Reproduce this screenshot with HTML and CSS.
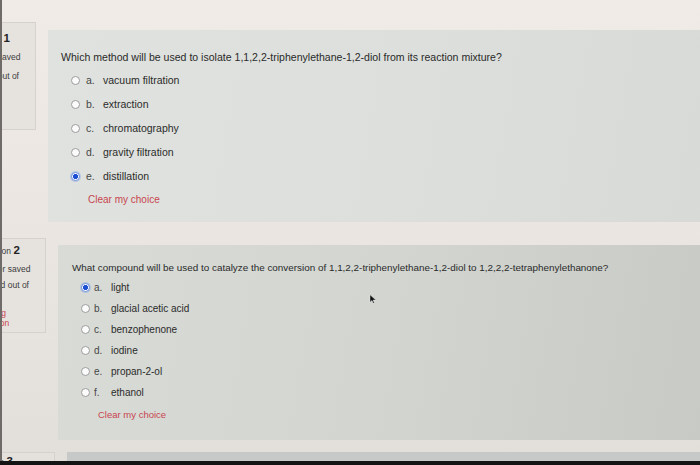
FILE: index.html
```html
<!DOCTYPE html>
<html lang="en">
<head>
<meta charset="utf-8">
<title>Quiz</title>
<link rel="stylesheet" href="styles.css">
</head>
<body>
<div class="screen">
  <div class="que q1">
    <div class="info">
      <div class="qno">Question <b>1</b></div>
      <div class="state">Answer saved</div>
      <div class="grade">Marked out of 1.00</div>
      <div class="flag"><svg class="flagicon" viewBox="0 0 10 10" width="10" height="10"><path d="M2 1v8M2 1.5h6l-1.5 2 1.5 2H2" fill="none" stroke="#c9454f" stroke-width="1"/></svg> Flag question</div>
    </div>
    <div class="content">
      <div class="qtext">Which method will be used to isolate 1,1,2,2-triphenylethane-1,2-diol from its reaction mixture?</div>
      <div class="answer">
        <div class="opt"><span class="radio"></span><span class="letter">a.</span><span class="label">vacuum filtration</span></div>
        <div class="opt"><span class="radio"></span><span class="letter">b.</span><span class="label">extraction</span></div>
        <div class="opt"><span class="radio"></span><span class="letter">c.</span><span class="label">chromatography</span></div>
        <div class="opt"><span class="radio"></span><span class="letter">d.</span><span class="label">gravity filtration</span></div>
        <div class="opt"><span class="radio checked"></span><span class="letter">e.</span><span class="label">distillation</span></div>
      </div>
      <div class="clear">Clear my choice</div>
    </div>
  </div>

  <div class="que q2">
    <div class="info">
      <div class="qno">Question <b>2</b></div>
      <div class="state">Answer saved</div>
      <div class="grade">Marked out of 1.00</div>
      <div class="flag"><svg class="flagicon" viewBox="0 0 10 10" width="10" height="10"><path d="M2 1v8M2 1.5h6l-1.5 2 1.5 2H2" fill="none" stroke="#c9454f" stroke-width="1"/></svg> Flag question</div>
    </div>
    <div class="content">
      <div class="qtext">What compound will be used to catalyze the conversion of 1,1,2,2-triphenylethane-1,2-diol to 1,2,2,2-tetraphenylethanone?</div>
      <div class="answer">
        <div class="opt"><span class="radio checked"></span><span class="letter">a.</span><span class="label">light</span></div>
        <div class="opt"><span class="radio"></span><span class="letter">b.</span><span class="label">glacial acetic acid</span></div>
        <div class="opt"><span class="radio"></span><span class="letter">c.</span><span class="label">benzophenone</span></div>
        <div class="opt"><span class="radio"></span><span class="letter">d.</span><span class="label">iodine</span></div>
        <div class="opt"><span class="radio"></span><span class="letter">e.</span><span class="label">propan-2-ol</span></div>
        <div class="opt"><span class="radio"></span><span class="letter">f.</span><span class="label">ethanol</span></div>
      </div>
      <div class="clear">Clear my choice</div>
    </div>
  </div>

  <div class="que q3">
    <div class="info">
      <div class="qno">Question <b>3</b></div>
    </div>
    <div class="content"></div>
  </div>

  <svg class="cursor" viewBox="0 0 8 12" width="7" height="10"><path d="M1 1v9l2.3-2.2 1.6 3.4 1.3-.6-1.6-3.3H8z" fill="#111" stroke="#eee" stroke-width=".5"/></svg>
</div>
</body>
</html>
```

FILE: styles.css
```css
html, body {
  margin: 0;
  height: 465px;
  overflow: hidden;
  background: #141414;
}

.screen {
  position: relative;
  height: 461px;
  overflow: hidden;
  border-left: 2px solid #6e6b68;
  background: linear-gradient(180deg, #f1ebe7 0%, #ebe6e2 45%, #e2dfdb 100%);
  font-family: "Liberation Sans", Arial, Helvetica, sans-serif;
  color: #2c2c2c;
}

.que {
  display: flex;
  align-items: flex-start;
  gap: 12px;
}

.info {
  flex: none;
  box-sizing: border-box;
  background: #e6e3df;
  border: 1px solid #d5d2ce;
  border-left: 0;
  font-size: 8.5px;
  color: #3b3b3b;
  overflow: hidden;
}

.info .qno {
  line-height: 14px;
  white-space: nowrap;
}

.info .qno b {
  font-size: 11.5px;
  color: #222;
}

.info .state,
.info .grade,
.info .flag {
  line-height: 10px;
}

.info .flag {
  color: #c9454f;
}

.flagicon {
  vertical-align: -1px;
}

/* Question 1 block */
.q1 {
  padding-top: 22px;
}

.q1 .info {
  width: 69px;
  height: 108px;
  margin-left: -35px;
  padding: 8px 11px 0 0;
}

.q1 .state { margin-top: 6px; }
.q1 .grade { margin-top: 9px; }
.q1 .flag { margin-top: 14px; }

.content {
  flex: 1;
  box-sizing: border-box;
}

.q1 .content {
  margin-top: 8px;
  padding: 21px 13px 16px;
  background: linear-gradient(100deg, #dfe2de 0%, #dcdfdb 55%, #d7dad6 100%);
}

.qtext {
  line-height: 12px;
  color: #2a2a2a;
  white-space: nowrap;
}

.q1 .qtext { font-size: 10.55px; }

.answer {
  display: flex;
  flex-direction: column;
}

.opt {
  display: flex;
  align-items: center;
}

.radio {
  flex: none;
  width: 9px;
  height: 9px;
  box-sizing: border-box;
  border-radius: 50%;
  border: 1px solid #9c9c9c;
  background: #fbfbfb;
}

.radio.checked {
  border-color: #6c8fe0;
  background: radial-gradient(circle, #1d4fd3 0 2.2px, #ffffff 2.9px);
  box-shadow: 0 0 0 1px rgba(110, 150, 235, 0.35);
}

.letter {
  flex: none;
  width: 17px;
  color: #474747;
}

.label {
  color: #2b2b2b;
}

.q1 .answer { margin-top: 5px; padding-left: 10px; }
.q1 .opt { height: 24px; font-size: 10.5px; }
.q1 .letter { margin-left: 6px; }

.clear {
  margin-top: 6px;
  line-height: 12px;
  font-size: 10px;
  color: #c9454f;
}

.q1 .clear { padding-left: 27px; }

/* Question 2 block */
.q2 {
  margin-top: 16px;
}

.q2 .info {
  width: 69px;
  height: 95px;
  margin-left: -25px;
  padding: 4px 10px 0 0;
}

.q2 .state { margin-top: 6px; }
.q2 .grade { margin-top: 6px; }
.q2 .flag { margin-top: 7px; }

.q2 .content {
  margin-top: 7px;
  padding: 17px 14px 19px;
  background: linear-gradient(100deg, #d8dbd6 0%, #d2d5d0 50%, #c8cac5 100%);
}

.q2 .qtext { font-size: 9.9px; }
.q2 .answer { margin-top: 3px; padding-left: 9px; }
.q2 .opt { height: 21px; font-size: 10px; }
.q2 .letter { margin-left: 4px; }
.q2 .clear { padding-left: 26px; font-size: 9.5px; }

/* Question 3 block (cut off) */
.q3 {
  margin-top: 12px;
}

.q3 .info {
  width: 85px;
  height: 20px;
  margin-left: -32px;
  padding-top: 1px;
  background: #e4e1dd;
}

.q3 .content {
  height: 20px;
  background: #c6c9c7;
}

.cursor {
  position: absolute;
  left: 367px;
  top: 294px;
}
```
